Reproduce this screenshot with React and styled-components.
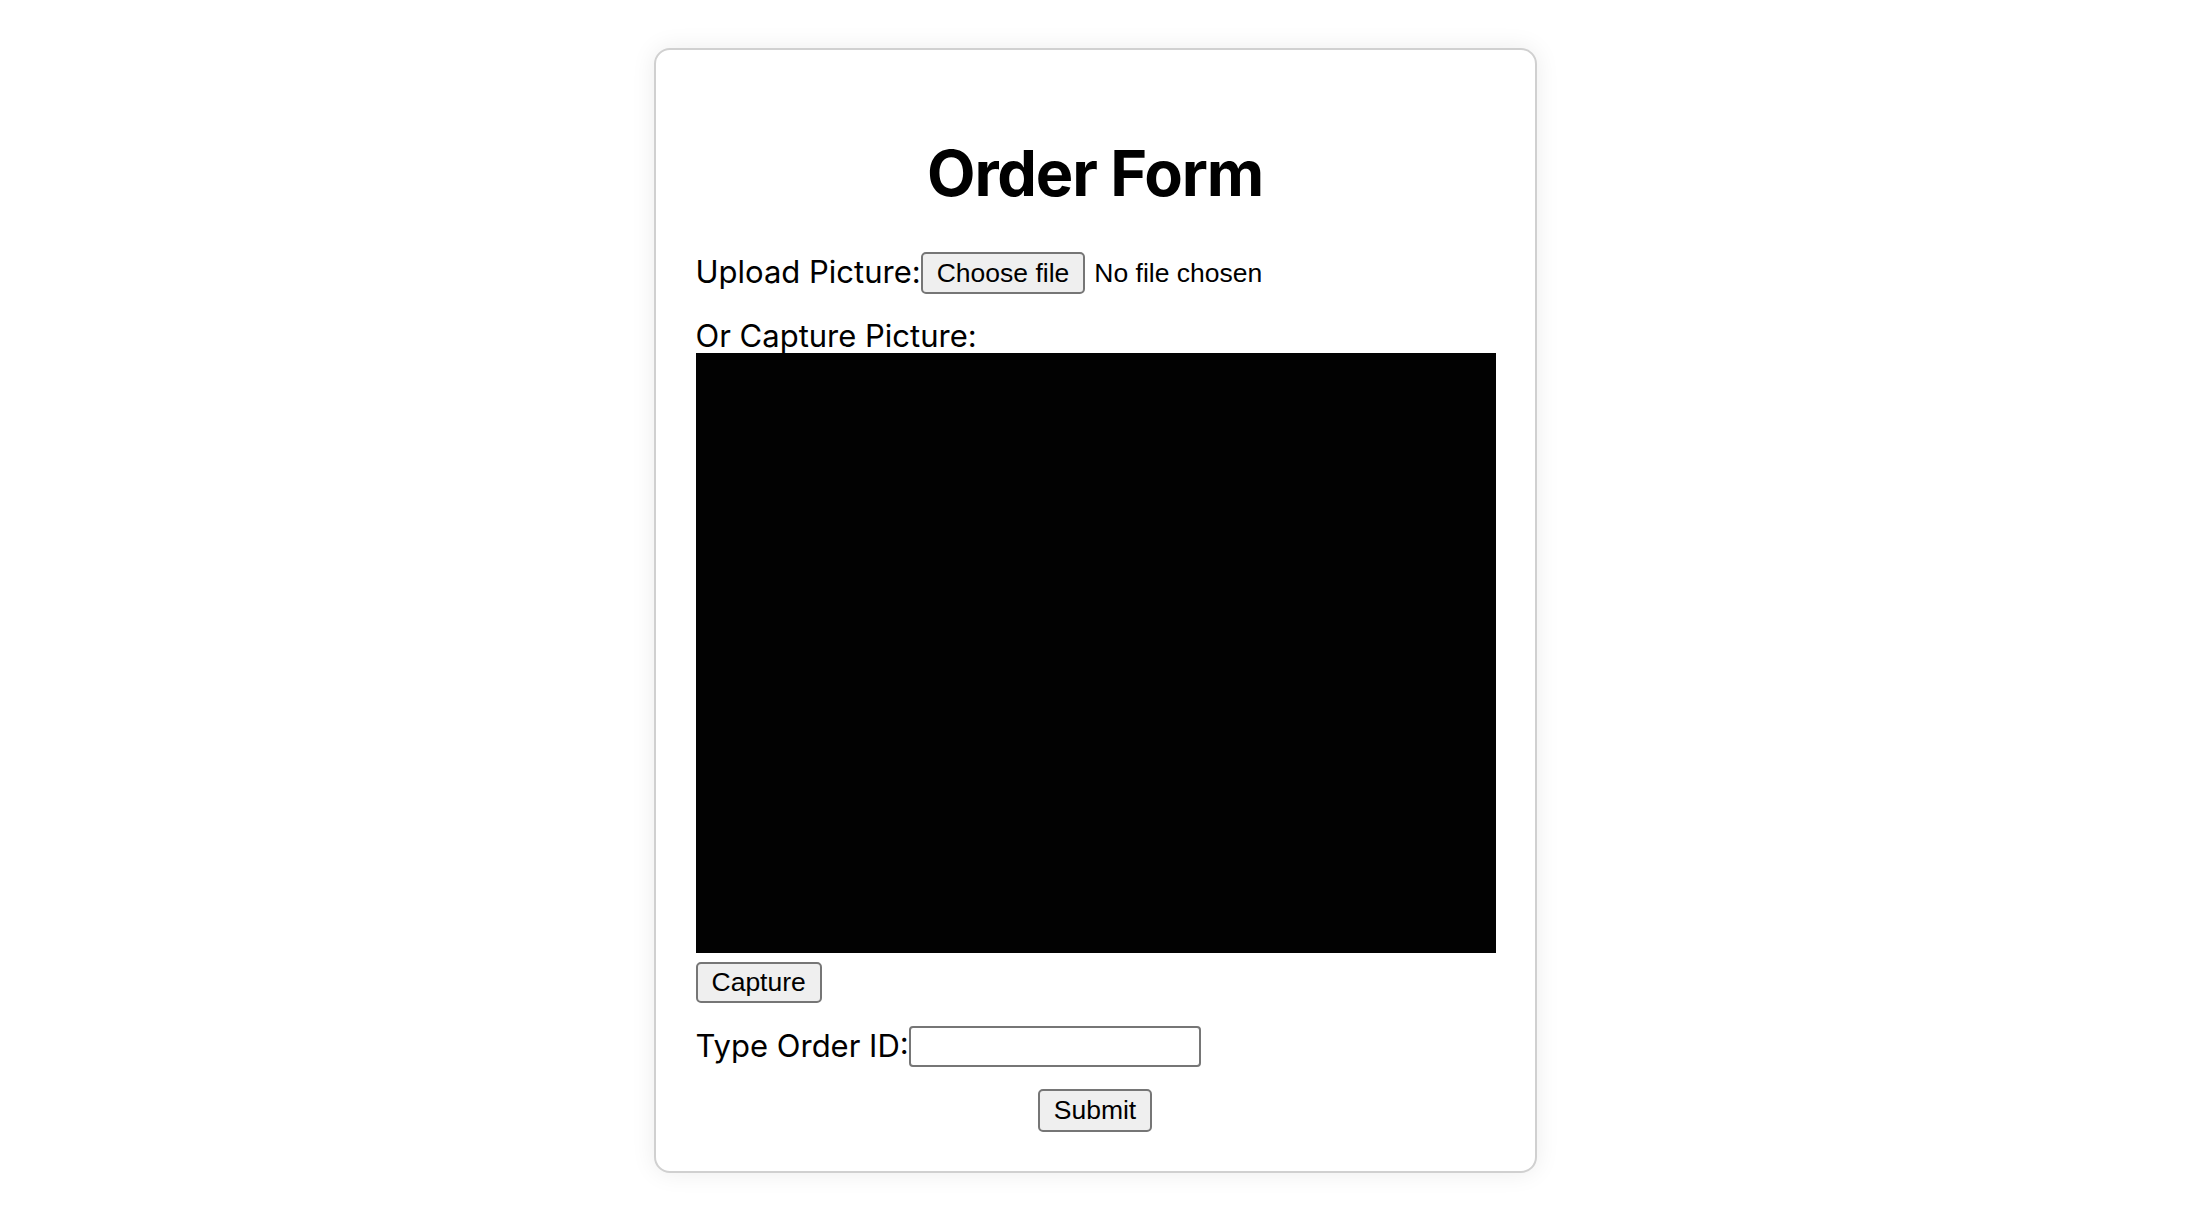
import React, { useState } from 'react'
import styled, { createGlobalStyle } from 'styled-components'

const GlobalStyle = createGlobalStyle`
  body {
    margin: 0;
    background: #ffffff;
    font-family: Inter, "Noto Sans", sans-serif;
    color: #000000;
  }
`

const Page = styled.div`
  display: flex;
  justify-content: center;
  padding-top: 48px;
  padding-bottom: 40px;
`

const Card = styled.form`
  box-sizing: border-box;
  width: 883px;
  padding: 0 40px 39px;
  border: 2px solid #d0d0d0;
  border-radius: 16px;
  box-shadow: 0 0 24px rgba(0, 0, 0, 0.08);
  background: #ffffff;
  display: flex;
  flex-direction: column;
`

const Title = styled.h1`
  margin: 84px 0 40px;
  font-size: 63px;
  line-height: 78px;
  font-weight: 700;
  text-align: center;
  letter-spacing: -1.2px;
`

const Row = styled.div`
  display: flex;
  align-items: center;
  margin-top: ${(p) => p.$gap || 0}px;
`

const Label = styled.label`
  font-size: 31px;
  line-height: 35px;
  font-weight: 400;
  margin-bottom: ${(p) => p.$lift || 0}px;
`

const NativeButton = styled.button`
  box-sizing: border-box;
  height: ${(p) => p.$h || 42}px;
  padding: 0 14px;
  font-family: "Liberation Sans", Arial, sans-serif;
  font-size: 26.5px;
  color: #000000;
  background: #efefef;
  border: 2px solid #767676;
  border-radius: 5px;
  cursor: pointer;
`

const FileName = styled.span`
  margin-left: 9px;
  font-family: "Liberation Sans", Arial, sans-serif;
  font-size: 26.5px;
`

const HiddenFile = styled.input`
  display: none;
`

const Video = styled.div`
  width: 800px;
  height: 600px;
  background: #020202;
`

const TextInput = styled.input`
  box-sizing: border-box;
  width: 292px;
  height: 41px;
  padding: 0 6px;
  border: 2px solid #767676;
  border-radius: 4px;
  font-family: "Liberation Sans", Arial, sans-serif;
  font-size: 26px;
  background: #ffffff;
`

const SubmitRow = styled.div`
  display: flex;
  justify-content: center;
  margin-top: 22px;
`

export default function App() {
  const [fileName, setFileName] = useState('')
  const [orderId, setOrderId] = useState('')

  return (
    <>
      <GlobalStyle />
      <Page>
        <Card onSubmit={(e) => e.preventDefault()}>
          <Title>Order Form</Title>

          <Row>
            <Label htmlFor="picture" $lift={4}>Upload Picture:</Label>
            <NativeButton type="button" onClick={() => document.getElementById('picture').click()}>
              Choose file
            </NativeButton>
            <FileName>{fileName || 'No file chosen'}</FileName>
            <HiddenFile
              id="picture"
              type="file"
              accept="image/*"
              onChange={(e) => setFileName(e.target.files[0]?.name || '')}
            />
          </Row>

          <Row $gap={24}>
            <Label>Or Capture Picture:</Label>
          </Row>
          <Video />
          <Row $gap={9}>
            <NativeButton type="button" $h={41}>Capture</NativeButton>
          </Row>

          <Row $gap={23}>
            <Label htmlFor="order-id" $lift={3}>Type Order ID:</Label>
            <TextInput
              id="order-id"
              value={orderId}
              onChange={(e) => setOrderId(e.target.value)}
            />
          </Row>

          <SubmitRow>
            <NativeButton type="submit" $h={43}>Submit</NativeButton>
          </SubmitRow>
        </Card>
      </Page>
    </>
  )
}
